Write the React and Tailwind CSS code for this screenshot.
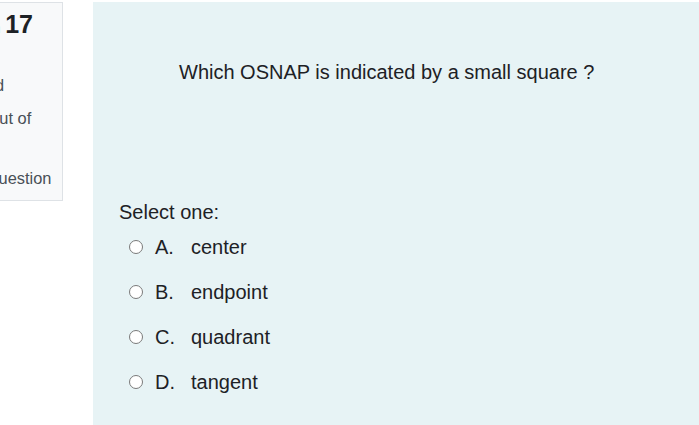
export default function App() {
  const options = [
    { letter: 'A.', text: 'center' },
    { letter: 'B.', text: 'endpoint' },
    { letter: 'C.', text: 'quadrant' },
    { letter: 'D.', text: 'tangent' },
  ];

  return (
    <div className="h-[425px] w-[699px] overflow-hidden bg-white pt-[2px] font-['Liberation_Sans',Arial,sans-serif] text-[#1d2125]">
      <div className="flex items-start">
        {/* question info box, cut off by the left edge */}
        <div className="ml-[-77px] h-[199px] w-[140px] shrink-0 border border-[#dee2e6] bg-[#f8f9fa] pl-[7px] pr-[9px] pt-[8px] text-[16.4px] leading-[24px] text-[#495057]">
          <h3 className="ml-[4px] whitespace-nowrap leading-[26px] text-[#1d2125]">
            Question <span className="text-[25px] font-bold">17</span>
          </h3>
          <div className="ml-[2px] mt-[9px]">Not yet answered</div>
          <div className="mt-[9px]">Marked out of 1.00</div>
          <div className="mt-[12px] flex items-center whitespace-nowrap">
            <svg width="16" height="16" viewBox="0 0 16 16" className="mr-[6px] shrink-0">
              <path d="M3 1v14M3 2h9l-2 3 2 3H3" fill="none" stroke="#6a737b" strokeWidth="1.5" />
            </svg>
            Flag question
          </div>
        </div>

        {/* question body */}
        <div className="ml-[30px] h-[423px] flex-1 bg-[#e7f3f5] pl-[26px]">
          <p className="mt-[55px] pl-[60px] text-[20px] leading-[30px]">
            Which OSNAP is indicated by a small square ?
          </p>
          <div className="mt-[110px] text-[20px] leading-[30px]">Select one:</div>
          <div className="mt-[5px] flex flex-col gap-[15px]">
            {options.map((o) => (
              <label key={o.letter} className="flex items-center text-[20px] leading-[30px]">
                <span className="ml-[10px] h-[14px] w-[14px] shrink-0 rounded-full border border-[#7a7a7a] bg-white" />
                <span className="ml-[12px] w-[36px]">{o.letter}</span>
                <span>{o.text}</span>
              </label>
            ))}
          </div>
        </div>
      </div>
    </div>
  );
}
